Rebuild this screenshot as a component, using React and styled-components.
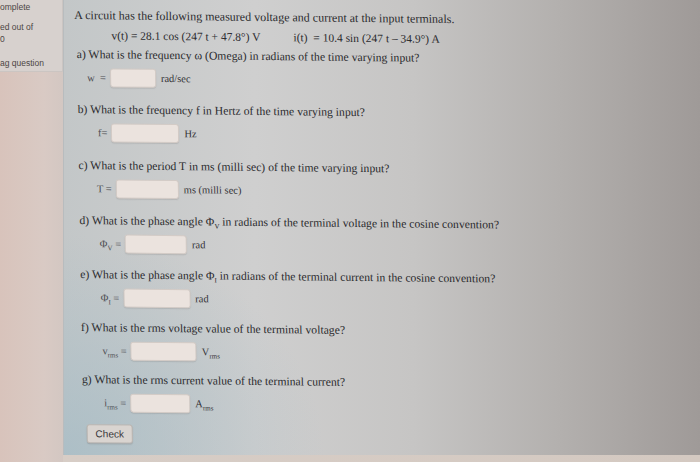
import React from "react";
import styled, { createGlobalStyle } from "styled-components";

const GlobalStyle = createGlobalStyle`
  html, body {
    margin: 0;
    padding: 0;
    background: #d6cbc6;
  }
  body {
    width: 700px;
    height: 462px;
    overflow: hidden;
  }
`;

const questions = [
  {
    id: "a",
    text: <>a) What is the frequency &omega; (Omega) in radians of the time varying input?</>,
    label: <>w&nbsp; =</>,
    unit: "rad/sec",
    indent: 10,
    width: 46,
    after: 13,
  },
  {
    id: "b",
    text: "b) What is the frequency f in Hertz of the time varying input?",
    label: <>f=</>,
    unit: "Hz",
    indent: 20,
    width: 68,
    after: 14,
  },
  {
    id: "c",
    text: "c) What is the period T in ms (milli sec) of the time varying input?",
    label: <>T =</>,
    unit: "ms (milli sec)",
    indent: 18,
    width: 63,
    after: 13,
  },
  {
    id: "d",
    text: (
      <>
        d) What is the phase angle &Phi;<sub>V</sub> in radians of the terminal voltage in the cosine convention?
      </>
    ),
    label: (
      <>
        &Phi;<sub>V</sub> =
      </>
    ),
    unit: "rad",
    indent: 20,
    width: 62,
    after: 12,
  },
  {
    id: "e",
    text: (
      <>
        e) What is the phase angle &Phi;<sub>I</sub> in radians of the terminal current in the cosine convention?
      </>
    ),
    label: (
      <>
        &Phi;<sub>I</sub> =
      </>
    ),
    unit: "rad",
    indent: 20,
    width: 67,
    after: 11,
  },
  {
    id: "f",
    text: "f) What is the rms voltage value of the terminal voltage?",
    label: (
      <>
        v<sub>rms</sub> =
      </>
    ),
    unit: (
      <>
        V<sub>rms</sub>
      </>
    ),
    indent: 21,
    width: 66,
    after: 10,
  },
  {
    id: "g",
    text: "g) What is the rms current value of the terminal current?",
    label: (
      <>
        i<sub>rms</sub> =
      </>
    ),
    unit: (
      <>
        A<sub>rms</sub>
      </>
    ),
    indent: 22,
    width: 60,
    after: 12,
  },
];

export default function App() {
  return (
    <>
      <GlobalStyle />
      <Page>
        <Sidebar>
          <InfoBox>
            <InfoLine>omplete</InfoLine>
            <InfoLine $gap={8}>ed out of</InfoLine>
            <InfoLine>0</InfoLine>
            <InfoLine $gap={12}>ag question</InfoLine>
          </InfoBox>
        </Sidebar>
        <Main>
          <Panel>
            <Tilt>
              <Intro>A circuit has the following measured voltage and current at the input terminals.</Intro>
              <Equations>
                <span>v(t) = 28.1 cos (247 t + 47.8&deg;) V</span>
                <span>i(t) &nbsp;= 10.4 sin (247 t &ndash; 34.9&deg;) A</span>
              </Equations>
              {questions.map((q) => (
                <Section key={q.id} $after={q.after}>
                  <Question>{q.text}</Question>
                  <AnswerRow $indent={q.indent}>
                    <Label>{q.label}</Label>
                    <Field $width={q.width} />
                    <Unit>{q.unit}</Unit>
                  </AnswerRow>
                </Section>
              ))}
              <CheckButton>Check</CheckButton>
            </Tilt>
          </Panel>
          <BottomStrip />
        </Main>
      </Page>
    </>
  );
}

const Page = styled.div`
  display: flex;
  width: 700px;
  height: 462px;
  overflow: hidden;
  background: linear-gradient(180deg, #d8cdc8 0%, #d3c5bf 60%, #d8cbc4 100%);
`;

const Sidebar = styled.aside`
  width: 63px;
  flex-shrink: 0;
  background: linear-gradient(90deg, #d8c3bb 0%, #d9cac4 70%, #d3c7c2 100%);
`;

const InfoBox = styled.div`
  height: 72px;
  padding: 1px 0 0 0;
  box-sizing: border-box;
  background: #d7d1ce;
  border-right: 1px solid #cbc5c2;
  border-bottom: 1px solid #cbc5c2;
  font-family: "Liberation Sans", Arial, sans-serif;
  font-size: 8.5px;
  color: #4c4644;
`;

const InfoLine = styled.div`
  line-height: 12px;
  margin-top: ${(p) => p.$gap || 0}px;
`;

const Main = styled.div`
  flex: 1;
  display: flex;
  flex-direction: column;
`;

const Panel = styled.section`
  height: 455px;
  box-sizing: border-box;
  padding: 5px 0 0 10px;
  overflow: hidden;
  background:
    radial-gradient(ellipse 260px 220px at 0% 100%, rgba(165, 188, 198, 0.75), rgba(165, 188, 198, 0) 100%),
    linear-gradient(90deg, #c3c7c8 0%, #cfcfcf 30%, #c6c5c4 55%, #b3b0ae 78%, #9f9a98 100%);
  border-left: 1px solid #b8bcbe;
`;

const Tilt = styled.div`
  transform-origin: 0 0;
  transform: rotate(0.6deg) skewX(1.5deg);
  font-family: "Liberation Serif", "Times New Roman", serif;
  font-size: 11.7px;
  color: #2b2b2e;

  sub {
    font-size: 7px;
    vertical-align: -3px;
    line-height: 0;
  }
`;

const Intro = styled.div`
  height: 20px;
  line-height: 20px;
  font-size: 12px;
`;

const Equations = styled.div`
  display: flex;
  gap: 33px;
  padding-left: 37px;
  height: 20px;
  line-height: 20px;
  font-size: 11.5px;
`;

const Section = styled.div`
  display: flex;
  flex-direction: column;
  gap: 2px;
  padding-left: 2px;
  margin-bottom: ${(p) => p.$after}px;
`;

const Question = styled.div`
  height: 20px;
  line-height: 20px;
  white-space: nowrap;
`;

const AnswerRow = styled.div`
  display: flex;
  align-items: center;
  height: 20px;
  padding-left: ${(p) => p.$indent}px;
  gap: 4px;
`;

const Label = styled.span`
  color: #4d4d52;
  font-size: 10.5px;
  white-space: nowrap;
`;

const Field = styled.div`
  width: ${(p) => p.$width}px;
  height: 19px;
  box-sizing: border-box;
  background: #ebe3de;
  border: 1px solid #d3cbc6;
  border-radius: 3px;
  box-shadow: 0 1px 1px rgba(120, 120, 120, 0.25);
`;

const Unit = styled.span`
  color: #333236;
  font-size: 10.5px;
  margin-left: 1px;
`;

const CheckButton = styled.button`
  margin: 0 0 0 6px;
  width: 46px;
  height: 19px;
  padding: 0;
  background: #d9d4d0;
  border: 1px solid #bcb7b3;
  border-radius: 3px;
  box-shadow: 0 1px 1px rgba(90, 90, 90, 0.25);
  font-family: "Liberation Sans", Arial, sans-serif;
  font-size: 10px;
  color: #38363a;
`;

const BottomStrip = styled.div`
  flex: 1;
  background: linear-gradient(90deg, #d7cdc6, #d4c9c1);
`;
